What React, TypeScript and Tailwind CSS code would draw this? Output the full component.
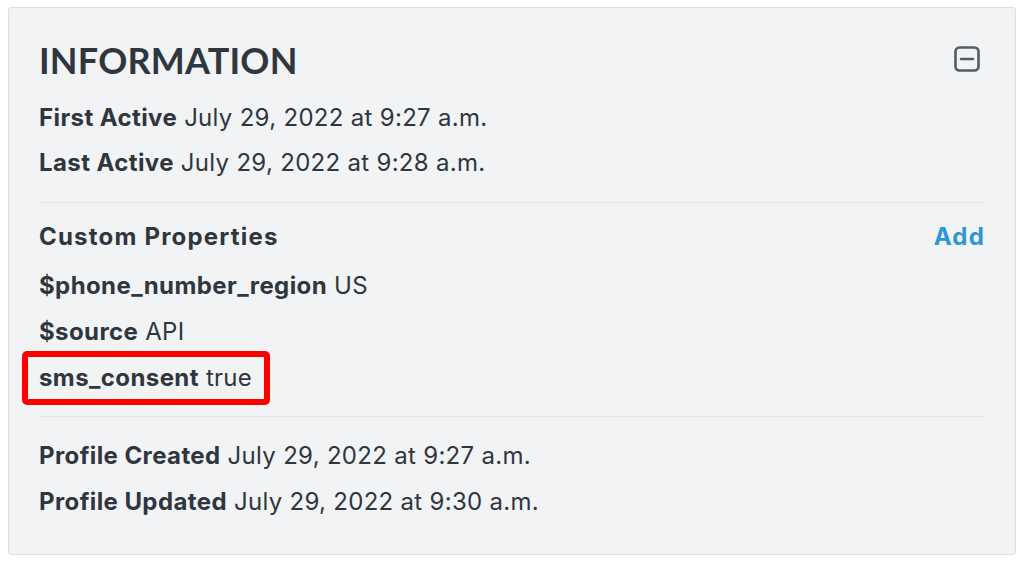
import React from 'react';

const heading = { fontFamily: 'Lato, "Open Sans", sans-serif' };
const body = { fontFamily: 'Inter, Lato, sans-serif' };

const Row = ({ label, value, className = '' }: { label: string; value: string; className?: string }) => (
    <div className={`flex items-center h-[45px] text-[24px] text-[#2f363d] tracking-[0.3px] ${className}`} style={body}>
        <span className="font-bold tracking-[0.4px]">{label}</span>
        <span className="ml-[7px]">{value}</span>
    </div>
);

const MinusSquare = () => (
    <svg width="26" height="26" viewBox="0 0 26 26" fill="none" stroke="#555b63" strokeWidth="2.6" strokeLinecap="round">
        <rect x="1.5" y="1.5" width="23" height="23" rx="4" />
        <line x1="7" y1="13" x2="19" y2="13" />
    </svg>
);

export default function App() {
    return (
        <div className="w-[1024px] h-[563px] bg-white pt-[7px] pl-[8px]" style={heading}>
            <div className="w-[1008px] h-[548px] bg-[#f2f3f5] border border-[#dcdee1] rounded-[3px] px-[30px] pt-[27px]">
                <div className="flex items-center justify-between h-[50px]">
                    <h2 className="text-[36px] font-bold text-[#2f363d] tracking-[0.2px]">INFORMATION</h2>
                    <div className="mr-[5px] -mt-[3px]">
                        <MinusSquare />
                    </div>
                </div>
                <div className="mt-[10px]">
                    <Row label="First Active" value="July 29, 2022 at 9:27 a.m." />
                    <Row label="Last Active" value="July 29, 2022 at 9:28 a.m." />
                </div>
                <div className="mt-[17px] border-t border-[#e2e4e7]" />
                <div className="mt-[11px]">
                    <div className="flex items-center justify-between h-[46px] text-[24px] font-bold" style={body}>
                        <span className="text-[#2f363d] tracking-[1.2px]">Custom Properties</span>
                        <span className="text-[#2e95d6] tracking-[1.2px]">Add</span>
                    </div>
                    <Row label="$phone_number_region" value="US" className="mt-[3px] !h-[46px]" />
                    <Row label="$source" value="API" className="!h-[46px]" />
                    <div className="flex items-center h-[46px]">
                        <div className="relative flex items-center h-full text-[24px] text-[#2f363d] tracking-[0.3px]" style={body}>
                            <span className="font-bold tracking-[0.4px]">sms_consent</span>
                            <span className="ml-[7px]">true</span>
                            <div className="absolute -left-[17px] -right-[18px] -top-[4px] -bottom-[4px] border-[6px] border-[#ff0000] rounded-[5px]" />
                        </div>
                    </div>
                </div>
                <div className="mt-[15px] border-t border-[#e2e4e7]" />
                <div className="mt-[16px]">
                    <Row label="Profile Created" value="July 29, 2022 at 9:27 a.m." className="!h-[46px]" />
                    <Row label="Profile Updated" value="July 29, 2022 at 9:30 a.m." className="!h-[46px]" />
                </div>
            </div>
        </div>
    );
}
